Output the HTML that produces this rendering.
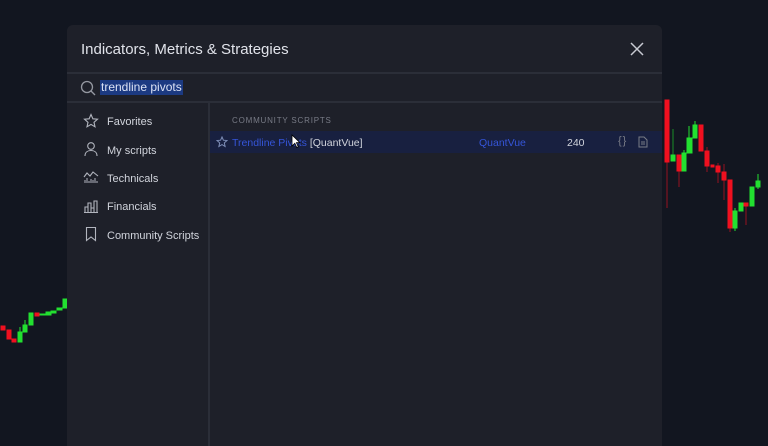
<!DOCTYPE html>
<html><head><style>
*{margin:0;padding:0;box-sizing:border-box}
html,body{width:768px;height:446px}
body{background:#121620;position:relative;overflow:hidden;font-family:"Liberation Sans",sans-serif}
.modal{position:absolute;left:67px;top:25px;width:595px;height:421px;background:#1e2029;border-radius:6px 6px 0 0}
.abs{position:absolute}
.title{left:14px;top:16px;color:#e1e3ea;font-size:15px}
.hl{height:2px;background:#2b2e38;left:0;right:0}
.side{color:#d1d4dc;font-size:11px}
.side div{position:absolute;left:40px}
.icon{position:absolute}
</style></head><body>
<svg class="abs" style="left:0;top:0" width="768" height="446">
<g fill="#f0101f" stroke="#f0101f">
<rect x="665" y="100" width="4" height="62"/><line x1="667" y1="162" x2="667" y2="208" stroke-width="1" opacity=".6"/>
<rect x="677" y="155" width="4" height="16"/><line x1="679" y1="171" x2="679" y2="187" opacity=".6"/>
<rect x="699" y="125" width="4" height="26"/>
<rect x="705" y="151" width="4" height="15"/><line x1="707" y1="147" x2="707" y2="172" opacity=".6"/>
<rect x="711" y="165" width="3" height="2"/>
<rect x="716" y="166" width="4" height="6"/><line x1="718" y1="163" x2="718" y2="183" opacity=".6"/>
<rect x="722" y="172" width="4" height="8"/><line x1="724" y1="164" x2="724" y2="200" opacity=".6"/>
<rect x="728" y="180" width="4" height="48"/><line x1="730" y1="228" x2="730" y2="232" opacity=".6"/>
<rect x="744" y="203" width="4" height="3"/><line x1="746" y1="206" x2="746" y2="225" opacity=".6"/>
<rect x="1" y="326" width="4" height="4"/><rect x="7" y="330" width="4" height="9"/><rect x="12" y="339" width="4" height="3"/><rect x="35" y="313" width="4" height="3"/>
</g>
<g fill="#22e030" stroke="#22e030">
<rect x="671" y="155" width="4" height="6"/><line x1="673" y1="129" x2="673" y2="155" opacity=".6"/>
<rect x="682" y="153" width="4" height="18"/><line x1="684" y1="150" x2="684" y2="153"/>
<rect x="687" y="138" width="5" height="15"/><line x1="689" y1="126" x2="689" y2="138"/>
<rect x="693" y="125" width="4" height="13"/><line x1="695" y1="121" x2="695" y2="125"/>
<rect x="733" y="211" width="4" height="17"/><line x1="735" y1="208" x2="735" y2="231"/>
<rect x="739" y="203" width="4" height="8"/>
<rect x="750" y="187" width="4" height="19"/>
<rect x="756" y="181" width="4" height="6"/><line x1="758" y1="174" x2="758" y2="189"/>
<rect x="18" y="332" width="4" height="10"/><line x1="20" y1="327" x2="20" y2="332"/>
<rect x="23" y="325" width="4" height="7"/><line x1="25" y1="320" x2="25" y2="325"/>
<rect x="29" y="313" width="4" height="12"/>
<rect x="40" y="314" width="5" height="1"/><rect x="46" y="312" width="5" height="3"/><rect x="51" y="311" width="5" height="2"/><rect x="57" y="308" width="5" height="2"/><rect x="63" y="299" width="4" height="9"/>
</g>
</svg>
<div class="modal">
<div class="abs title">Indicators, Metrics &amp; Strategies</div>
<svg class="abs" style="left:563px;top:17px" width="14" height="14"><path d="M1 1L13 13M13 1L1 13" stroke="#c8cad2" stroke-width="1.5"/></svg>
<div class="abs hl" style="top:47px"></div>
<svg class="abs" style="left:13px;top:55px" width="16" height="16"><circle cx="7" cy="7" r="5.5" fill="none" stroke="#9598a1" stroke-width="1.3"/><path d="M11 11L15 15" stroke="#9598a1" stroke-width="1.3"/></svg>
<div class="abs" style="left:33px;top:55px;height:15px;background:#1c3a82;color:#dbe2f5;font-size:12px;line-height:15px;padding:0 1px">trendline pivots</div>
<div class="abs hl" style="top:76px"></div>
<div class="abs" style="left:141px;top:78px;width:2px;bottom:0;background:#2b2e38"></div>
<div class="abs side" style="left:0;top:78px;width:141px;height:200px">
<svg class="icon" style="left:16px;top:10px" width="16" height="16"><path d="M8 1.5L9.9 5.8L14.5 6.2L11 9.3L12 13.8L8 11.4L4 13.8L5 9.3L1.5 6.2L6.1 5.8Z" fill="none" stroke="#b2b5be" stroke-width="1.1"/></svg>
<div style="top:13px">Favorites</div>
<svg class="icon" style="left:16px;top:38px" width="16" height="16"><circle cx="8" cy="5" r="3.3" fill="none" stroke="#b2b5be" stroke-width="1.1"/><path d="M2 15C2 11 5 9.5 8 9.5S14 11 14 15" fill="none" stroke="#b2b5be" stroke-width="1.1"/></svg>
<div style="top:42px">My scripts</div>
<svg class="icon" style="left:16px;top:66px" width="16" height="16"><path d="M1 8L4 4L7 7L10 3L15 7" fill="none" stroke="#b2b5be" stroke-width="1.1"/><path d="M2 14V11M4 14V9M6 14V12M8 14V10M10 14V11M12 14V9M14 14V12" stroke="#b2b5be"/></svg>
<div style="top:70px">Technicals</div>
<svg class="icon" style="left:16px;top:95px" width="16" height="16"><path d="M2 14V9H5V14M5 14V5H8V14M8 14V10H11V14M11 14V3H14V14M1 14.5H15" fill="none" stroke="#b2b5be" stroke-width="1.1"/></svg>
<div style="top:98px">Financials</div>
<svg class="icon" style="left:16px;top:123px" width="16" height="16"><path d="M3.5 1.5H12.5V14.5L8 11L3.5 14.5Z" fill="none" stroke="#b2b5be" stroke-width="1.1"/></svg>
<div style="top:127px">Community Scripts</div>
</div>
<div class="abs" style="left:165px;top:91px;color:#787b86;font-size:8px;letter-spacing:.8px">COMMUNITY SCRIPTS</div>
<div class="abs" style="left:143px;top:106px;width:452px;height:22px;background:#182040"></div>
<svg class="abs" style="left:149px;top:111px" width="12" height="12"><path d="M6 1L7.4 4.2L11 4.5L8.3 6.9L9.1 10.5L6 8.6L2.9 10.5L3.7 6.9L1 4.5L4.6 4.2Z" fill="none" stroke="#7f8fb8" stroke-width="1"/></svg>
<div class="abs" style="left:165px;top:112px;font-size:10.5px;color:#3555d8">Trendline Pivots <span style="color:#d1d4dc">[QuantVue]</span></div>
<svg class="abs" style="left:224px;top:109px" width="10" height="14"><path d="M1 1V12L3.8 9.3L5.8 13.5L7.3 12.8L5.4 8.7L9 8.7Z" fill="#fff" stroke="#000" stroke-width=".8"/></svg>
<div class="abs" style="left:412px;top:112px;font-size:10.5px;color:#3555d8">QuantVue</div>
<div class="abs" style="left:500px;top:112px;font-size:10.5px;color:#d1d4dc">240</div>
<div class="abs" style="left:551px;top:110px;font-size:11px;color:#787b86;letter-spacing:1px">{}</div>
<svg class="abs" style="left:571px;top:111px" width="10" height="12"><path d="M1 1H6L9 4V11H1Z M3 6H7M3 8H7" fill="none" stroke="#787b86" stroke-width="1"/></svg>
</div>
</body></html>
